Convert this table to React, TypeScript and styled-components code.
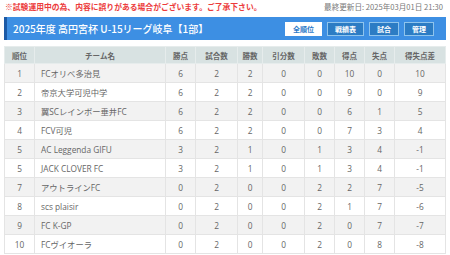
import React from "react";
import styled, { createGlobalStyle } from "styled-components";

// 順位表の1行分
interface Standing {
  rank: number;
  team: string;
  points: number;
  played: number;
  won: number;
  drawn: number;
  lost: number;
  gf: number;
  ga: number;
  diff: number;
}

const standings: Standing[] = [
  { rank: 1, team: "FCオリベ多治見", points: 6, played: 2, won: 2, drawn: 0, lost: 0, gf: 10, ga: 0, diff: 10 },
  { rank: 2, team: "帝京大学可児中学", points: 6, played: 2, won: 2, drawn: 0, lost: 0, gf: 9, ga: 0, diff: 9 },
  { rank: 3, team: "翼SCレインボー垂井FC", points: 6, played: 2, won: 2, drawn: 0, lost: 0, gf: 6, ga: 1, diff: 5 },
  { rank: 4, team: "FCV可児", points: 6, played: 2, won: 2, drawn: 0, lost: 0, gf: 7, ga: 3, diff: 4 },
  { rank: 5, team: "AC Leggenda GIFU", points: 3, played: 2, won: 1, drawn: 0, lost: 1, gf: 3, ga: 4, diff: -1 },
  { rank: 5, team: "JACK CLOVER FC", points: 3, played: 2, won: 1, drawn: 0, lost: 1, gf: 3, ga: 4, diff: -1 },
  { rank: 7, team: "アウトラインFC", points: 0, played: 2, won: 0, drawn: 0, lost: 2, gf: 2, ga: 7, diff: -5 },
  { rank: 8, team: "scs plaisir", points: 0, played: 2, won: 0, drawn: 0, lost: 2, gf: 1, ga: 7, diff: -6 },
  { rank: 9, team: "FC K-GP", points: 0, played: 2, won: 0, drawn: 0, lost: 2, gf: 0, ga: 7, diff: -7 },
  { rank: 10, team: "FCヴイオーラ", points: 0, played: 2, won: 0, drawn: 0, lost: 2, gf: 0, ga: 8, diff: -8 },
];

// 列見出しと幅
const columns = [
  { label: "順位", width: 30 },
  { label: "チーム名", width: 131 },
  { label: "勝点", width: 30 },
  { label: "試合数", width: 42 },
  { label: "勝数", width: 25 },
  { label: "引分数", width: 42 },
  { label: "敗数", width: 30 },
  { label: "得点", width: 30 },
  { label: "失点", width: 30 },
  { label: "得失点差", width: 51 },
];

const App: React.FC = () => {
  return (
    <>
      <GlobalStyle />
      <Page>
        <TopLine>
          <Notice>※試験運用中の為、内容に誤りがある場合がございます。ご了承下さい。</Notice>
          <Updated>最終更新日: 2025年03月01日 21:30</Updated>
        </TopLine>

        <TitleBar>
          <Title>2025年度 高円宮杯 U-15リーグ岐阜【1部】</Title>
          <Nav>
            <NavButton active>全順位</NavButton>
            <NavButton>戦績表</NavButton>
            <NavButton>試合</NavButton>
            <NavButton>管理</NavButton>
          </Nav>
        </TitleBar>

        <Table>
          <colgroup>
            {columns.map((c) => (
              <col key={c.label} style={{ width: c.width }} />
            ))}
          </colgroup>
          <thead>
            <tr>
              {columns.map((c) => (
                <Th key={c.label}>{c.label}</Th>
              ))}
            </tr>
          </thead>
          <tbody>
            {standings.map((s, i) => (
              <Row key={s.team} striped={i % 2 === 0}>
                <Td>{s.rank}</Td>
                <Td left>{s.team}</Td>
                <Td>{s.points}</Td>
                <Td>{s.played}</Td>
                <Td>{s.won}</Td>
                <Td>{s.drawn}</Td>
                <Td>{s.lost}</Td>
                <Td>{s.gf}</Td>
                <Td>{s.ga}</Td>
                <Td>{s.diff}</Td>
              </Row>
            ))}
          </tbody>
        </Table>
      </Page>
    </>
  );
};

const GlobalStyle = createGlobalStyle`
  body {
    margin: 0;
    background: #ffffff;
    font-family: "Open Sans", "Noto Sans CJK JP", sans-serif;
  }
`;

// ページ全体
const Page = styled.div`
  width: 450px;
  padding: 0 4px;
  box-sizing: border-box;
`;

// 注意書きと更新日時の行
const TopLine = styled.div`
  display: flex;
  justify-content: space-between;
  align-items: center;
  height: 17px;
  padding: 0 3px 0 1px;
`;

const Notice = styled.span`
  color: #ec3b3b;
  font-size: 7.8px;
  font-weight: bold;
  font-family: "Noto Sans CJK JP", sans-serif;
  margin-top: -5px;
`;

const Updated = styled.span`
  color: #777;
  font-size: 7.6px;
  font-family: "Noto Sans CJK JP", sans-serif;
  margin-top: -5px;
`;

// 青い見出しバー
const TitleBar = styled.div`
  display: flex;
  align-items: center;
  justify-content: space-between;
  height: 23px;
  background: #3d8fe3;
  border-left: 3px solid #1c5aa6;
  padding: 0 12px 0 6px;
`;

const Title = styled.h1`
  margin: 0;
  color: #ffffff;
  font-size: 10px;
  font-weight: 500;
  font-family: "Noto Sans CJK JP", sans-serif;
`;

const Nav = styled.div`
  display: flex;
  gap: 5px;
`;

const NavButton = styled.button<{ active?: boolean }>`
  height: 14px;
  padding: 0 7px;
  border: 1px solid ${({ active }) => (active ? "#ffffff" : "#8fc4ec")};
  background: ${({ active }) => (active ? "#ffffff" : "#2c7cc4")};
  color: ${({ active }) => (active ? "#2a78c8" : "#ffffff")};
  font-size: 7px;
  font-weight: bold;
  font-family: "Noto Sans CJK JP", sans-serif;
  line-height: 12px;
  cursor: pointer;
`;

// 順位表
const Table = styled.table`
  width: 441px;
  margin-top: 6px;
  border-collapse: collapse;
  table-layout: fixed;
  font-size: 8px;
  color: #666;
`;

const Th = styled.th`
  height: 16px;
  padding: 0;
  background: #d8e2e2;
  color: #666;
  font-weight: bold;
  font-size: 7.5px;
  font-family: "Noto Sans CJK JP", sans-serif;
  border: 1px solid #e6ecec;
`;

const Row = styled.tr<{ striped: boolean }>`
  background: ${({ striped }) => (striped ? "#f2f2f2" : "#ffffff")};
`;

const Td = styled.td<{ left?: boolean }>`
  height: 18px;
  padding: 0 0 0 ${({ left }) => (left ? "6px" : "0")};
  text-align: ${({ left }) => (left ? "left" : "center")};
  border: 1px solid #e4e4e4;
  font-family: "Open Sans", "Noto Sans CJK JP", sans-serif;
  font-size: 8.3px;
  white-space: nowrap;
`;

export default App;
